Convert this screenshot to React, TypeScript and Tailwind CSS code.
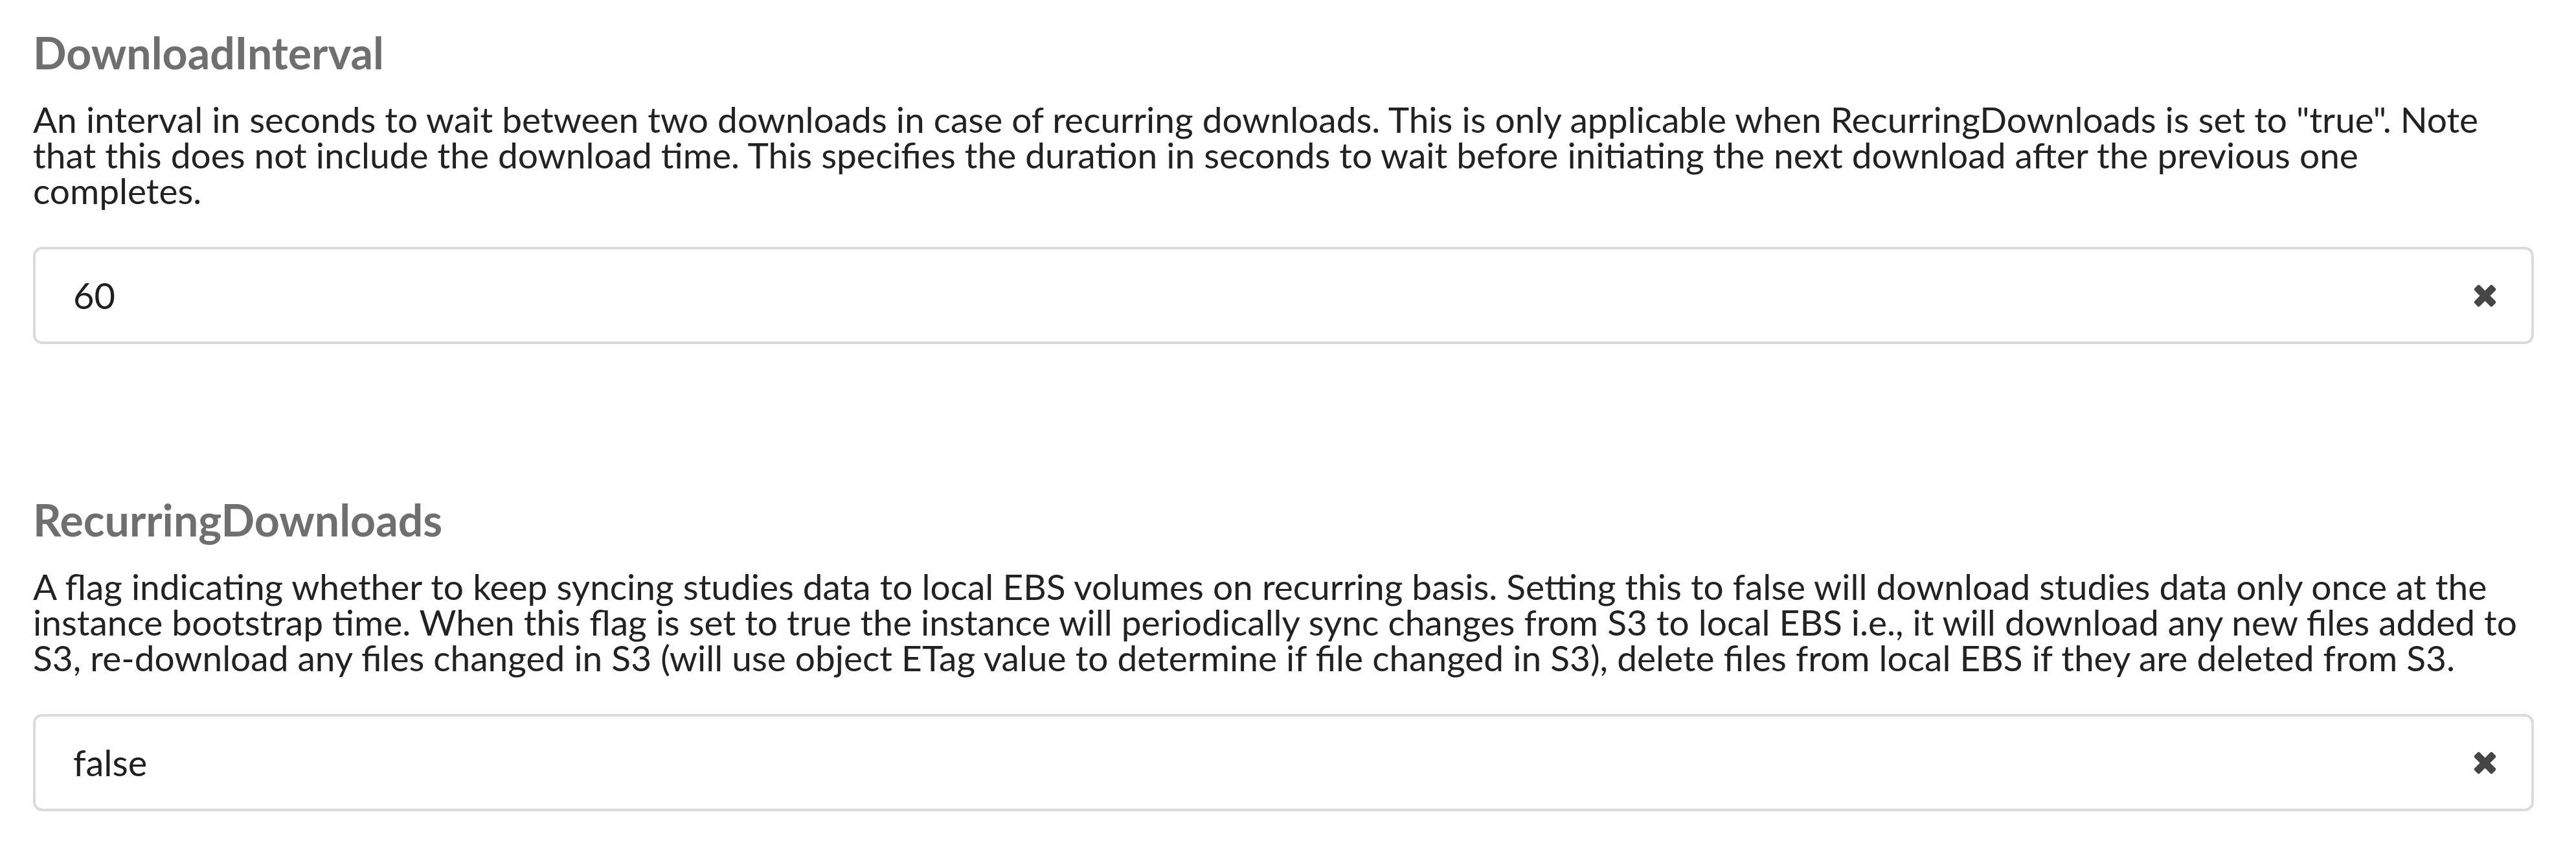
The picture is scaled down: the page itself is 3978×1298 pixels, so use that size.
const fields = [
  {
    name: 'DownloadInterval',
    description:
      'An interval in seconds to wait between two downloads in case of recurring downloads. This is only applicable when RecurringDownloads is set to "true". Note that this does not include the download time. This specifies the duration in seconds to wait before initiating the next download after the previous one completes.',
    value: '60',
  },
  {
    name: 'RecurringDownloads',
    description:
      'A flag indicating whether to keep syncing studies data to local EBS volumes on recurring basis. Setting this to false will download studies data only once at the instance bootstrap time. When this flag is set to true the instance will periodically sync changes from S3 to local EBS i.e., it will download any new files added to S3, re-download any files changed in S3 (will use object ETag value to determine if file changed in S3), delete files from local EBS if they are deleted from S3.',
    value: 'false',
  },
];

function ClearIcon() {
  return (
    <svg viewBox="0 0 36 36" className="w-[37px] h-[37px] shrink-0" fill="#464646">
      <rect x="12.5" y="-1" width="11" height="38" rx="2.5" transform="rotate(45 18 18)" />
      <rect x="12.5" y="-1" width="11" height="38" rx="2.5" transform="rotate(-45 18 18)" />
    </svg>
  );
}

function ParamField({ name, description, value }: { name: string; description: string; value: string }) {
  return (
    <div className="mb-[237px] last:mb-0">
      {/* Parameter label */}
      <h3 className="text-[68px] leading-[68px] font-bold text-[#6f6f6f]">{name}</h3>
      <p className="mt-[42px] h-[224px] text-[55px] leading-[55px] text-[#222222]">{description}</p>

      {/* Value box with clear button */}
      <div className="h-[150px] border-4 border-[#dbdbdb] rounded-[14px] bg-white flex items-center justify-between pl-[58px] pr-[53px]">
        <span className="text-[56px] leading-none text-[#1f1f1f]">{value}</span>
        <ClearIcon />
      </div>
    </div>
  );
}

export default function App() {
  return (
    <div className="min-h-screen bg-white pt-[47px] pl-[51px] pr-[65px] font-['Lato',sans-serif]">
      {fields.map((f) => (
        <ParamField key={f.name} {...f} />
      ))}
    </div>
  );
}
